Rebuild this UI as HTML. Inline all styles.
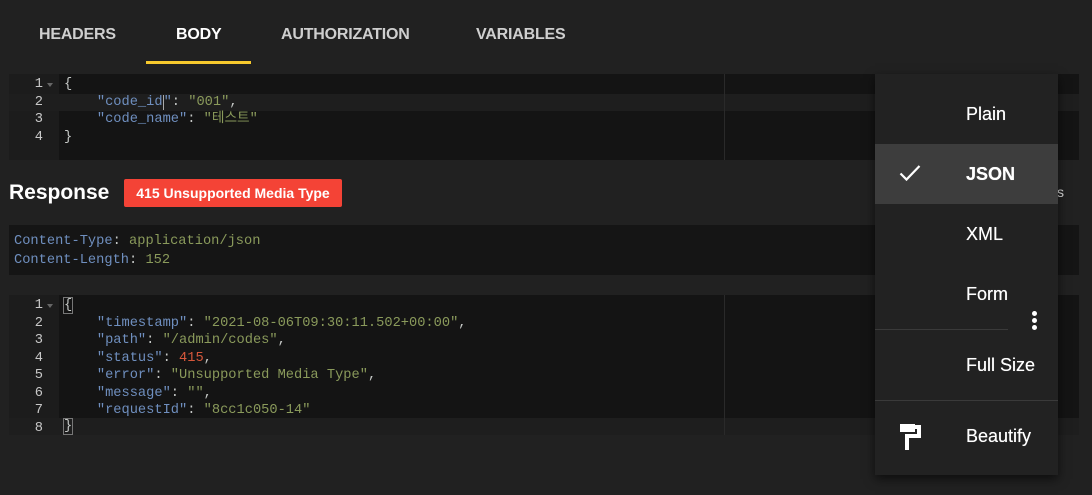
<!DOCTYPE html>
<html><head><meta charset="utf-8"><style>
*{margin:0;padding:0;box-sizing:border-box}
body{width:1092px;height:495px;background:#212121;position:relative;overflow:hidden;font-family:"Liberation Sans",sans-serif;color:#fff}
.tab{position:absolute;top:26px;font-size:16px;font-weight:bold;color:#cfcfcf;letter-spacing:-0.2px}
.ed{position:absolute;left:9px;width:1070px;background:#141414}
.gut{position:absolute;left:0;top:0;bottom:0;width:50px;background:#1c1c1c}
.ln{position:absolute;font-family:"Liberation Mono",monospace;font-size:13.7px;white-space:pre;color:#c5c8c6;height:17.5px;line-height:17.5px}
.num{position:absolute;width:34px;text-align:right;font-family:"Liberation Mono",monospace;font-size:13.7px;color:#c8c8c8;line-height:17.5px}
.k{color:#6f8fbf}.s{color:#8a9a5b}.n{color:#d5573b}
.vl{position:absolute;left:715px;top:0;bottom:0;width:1px;background:#2a2a2a}
.menu{position:absolute;left:875px;top:74px;width:183px;height:401px;background:#222;box-shadow:0 4px 10px rgba(0,0,0,.6)}
.mi{position:absolute;left:91px;font-size:18px;color:#fff;font-family:"Liberation Sans",sans-serif;text-shadow:0 0 0.4px #fff}
.t{position:absolute;left:0;right:0;top:2px;bottom:0}
</style></head><body>
<div class="tab" style="left:39px">HEADERS</div>
<div class="tab" style="left:176px;color:#fff">BODY</div>
<div class="tab" style="left:281px">AUTHORIZATION</div>
<div class="tab" style="left:476px">VARIABLES</div>
<div style="position:absolute;left:146px;top:61px;width:105px;height:3px;background:#f7c92d"></div>

<div class="ed" style="top:74px;height:86px">
 <div class="gut"></div>
 <div style="position:absolute;left:0;top:19.5px;width:1070px;height:17.5px;background:#1e1e1e"></div>
 <div class="vl"></div>
 <div class="t">
 <div class="num" style="top:0">1</div><div class="num" style="top:17.5px">2</div><div class="num" style="top:35px">3</div><div class="num" style="top:52.5px">4</div>
 <div style="position:absolute;left:38px;top:7px;border:3.5px solid transparent;border-top:4px solid #666"></div>
 <div class="ln" style="left:55px;top:0">{</div>
 <div class="ln" style="left:55px;top:17.5px">    <span class="k">"code_id</span><span style="border-left:1px solid #aaa"></span><span class="k">"</span>: <span class="s">"001"</span>,</div>
 <div class="ln" style="left:55px;top:35px">    <span class="k">"code_name"</span>: <span class="s" style="font-family:'Liberation Mono','Noto Sans CJK KR',monospace">"테스트"</span></div>
 <div class="ln" style="left:55px;top:52.5px">}</div>
 </div>
</div>

<div style="position:absolute;left:9px;top:181px;font-size:21px;font-weight:bold">Response</div>
<div style="position:absolute;left:124px;top:179px;width:218px;height:28px;background:#f44336;border-radius:2px;font-size:14px;font-weight:bold;line-height:28px;text-align:center">415 Unsupported Media Type</div>
<div style="position:absolute;left:1057px;top:184px;font-size:14px;color:#ddd">s</div>

<div class="ed" style="top:225px;height:50px;background:#151515">
 <div class="ln" style="left:5px;top:8px"><span class="k">Content-Type</span>: <span class="s">application/json</span></div>
 <div class="ln" style="left:5px;top:27px"><span class="k">Content-Length</span>: <span class="s">152</span></div>
</div>

<div class="ed" style="top:295px;height:140px">
 <div class="gut"></div>
 <div style="position:absolute;left:0;top:122.5px;width:1070px;height:17.5px;background:#1e1e1e"></div>
 <div class="vl"></div>
 <div class="t">
 <div class="num" style="top:0">1</div><div class="num" style="top:17.5px">2</div><div class="num" style="top:35px">3</div><div class="num" style="top:52.5px">4</div><div class="num" style="top:70px">5</div><div class="num" style="top:87.5px">6</div><div class="num" style="top:105px">7</div><div class="num" style="top:122.5px">8</div>
 <div style="position:absolute;left:38px;top:7px;border:3.5px solid transparent;border-top:4px solid #666"></div>
 <div class="ln" style="left:55px;top:0"><span style="outline:1px solid #777">{</span></div>
 <div class="ln" style="left:55px;top:17.5px">    <span class="k">"timestamp"</span>: <span class="s">"2021-08-06T09:30:11.502+00:00"</span>,</div>
 <div class="ln" style="left:55px;top:35px">    <span class="k">"path"</span>: <span class="s">"/admin/codes"</span>,</div>
 <div class="ln" style="left:55px;top:52.5px">    <span class="k">"status"</span>: <span class="n">415</span>,</div>
 <div class="ln" style="left:55px;top:70px">    <span class="k">"error"</span>: <span class="s">"Unsupported Media Type"</span>,</div>
 <div class="ln" style="left:55px;top:87.5px">    <span class="k">"message"</span>: <span class="s">""</span>,</div>
 <div class="ln" style="left:55px;top:105px">    <span class="k">"requestId"</span>: <span class="s">"8cc1c050-14"</span></div>
 <div class="ln" style="left:55px;top:120.5px"><span style="outline:1px solid #777">}</span></div>
 </div>
</div>

<div class="menu">
 <div class="mi" style="top:30px">Plain</div>
 <div style="position:absolute;left:0;top:70px;width:183px;height:60px;background:#3d3d3d"></div>
 <svg style="position:absolute;left:24px;top:90px" width="22" height="18" viewBox="0 0 22 18"><path d="M1.5 9.5l6 6L20.5 2" stroke="#fff" stroke-width="2.2" fill="none"/></svg>
 <div class="mi" style="top:90px;font-weight:bold">JSON</div>
 <div class="mi" style="top:150px">XML</div>
 <div class="mi" style="top:210px">Form</div>
 <div style="position:absolute;left:0;top:255px;width:133px;height:1px;background:#3a3a3a"></div>
 <div style="position:absolute;left:157px;top:237px;width:5px;height:5px;border-radius:50%;background:#fff"></div>
 <div style="position:absolute;left:157px;top:244px;width:5px;height:5px;border-radius:50%;background:#fff"></div>
 <div style="position:absolute;left:157px;top:251px;width:5px;height:5px;border-radius:50%;background:#fff"></div>
 <div class="mi" style="top:281px">Full Size</div>
 <div style="position:absolute;left:0;top:326px;width:183px;height:1px;background:#3a3a3a"></div>
 <svg style="position:absolute;left:24px;top:349px" width="24" height="28" viewBox="0 0 24 28"><path d="M1 1h15v8H1z" fill="#fff"/><path d="M16 4h4v9H8v14" stroke="#fff" stroke-width="4" fill="none"/></svg>
 <div class="mi" style="top:352px">Beautify</div>
</div>
</body></html>
